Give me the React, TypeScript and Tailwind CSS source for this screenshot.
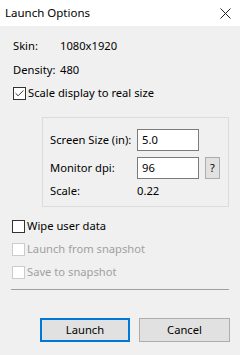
import { Check } from "lucide-react"

const Box = ({ checked, disabled }: { checked?: boolean; disabled?: boolean }) => (
  <div
    className={`w-[13px] h-[13px] border bg-white flex items-center justify-center shrink-0 ${
      disabled ? "border-[#cccccc]" : "border-[#333333]"
    }`}
  >
    {checked && <Check size={11} strokeWidth={2} className="text-[#222]" />}
  </div>
)

const CheckRow = ({ label, checked, disabled }: { label: string; checked?: boolean; disabled?: boolean }) => (
  <div className="flex items-center h-[16px] gap-[2px]">
    <Box checked={checked} disabled={disabled} />
    <span className={disabled ? "text-[#a0a0a0]" : "text-black"}>{label}</span>
  </div>
)

export default function App() {
  return (
    <div className="w-[240px] h-[355px] bg-[#f0f0f0] flex flex-col text-[11.2px] leading-[16px] font-['Noto_Sans',sans-serif] text-black whitespace-nowrap">
      <div className="h-[26px] bg-white flex items-center justify-between pl-[5px] pr-[9px] shrink-0">
        <span className="text-[11.5px]">Launch Options</span>
        <svg width="11" height="11" viewBox="0 0 11 11" className="text-[#222]">
          <path d="M0.5 0.5 L10.5 10.5 M10.5 0.5 L0.5 10.5" stroke="currentColor" strokeWidth="1" />
        </svg>
      </div>

      <div className="flex flex-col pl-[12px]">
        <div className="flex mt-[12px] h-[16px]">
          <span className="w-[48px] pl-[1px]">Skin:</span>
          <span>1080x1920</span>
        </div>
        <div className="flex mt-[8px] h-[16px]">
          <span className="w-[48px] pl-[1px]">Density:</span>
          <span>480</span>
        </div>
        <div className="mt-[7px] pl-[1px]">
          <CheckRow label="Scale display to real size" checked />
        </div>

        <div className="ml-[30px] mt-[16px] w-[187px] h-[90px] border border-[#dcdcdc] flex flex-col pl-[7px]">
          <div className="flex items-center mt-[11px] h-[22px]">
            <span className="w-[87px]">Screen Size (in):</span>
            <div className="w-[62px] h-[22px] border border-[#7a7a7a] bg-white flex items-center pl-[4px]">5.0</div>
          </div>
          <div className="flex items-center mt-[6px] h-[22px]">
            <span className="w-[87px]">Monitor dpi:</span>
            <div className="w-[62px] h-[22px] border border-[#7a7a7a] bg-white flex items-center pl-[4px]">96</div>
            <div className="ml-[6px] w-[15px] h-[22px] border border-[#adadad] bg-[#e1e1e1] flex items-center justify-center text-[11px]">?</div>
          </div>
          <div className="flex items-center mt-[4px] h-[16px]">
            <span className="w-[87px]">Scale:</span>
            <span>0.22</span>
          </div>
        </div>

        <div className="flex flex-col gap-[7px] mt-[11px]">
          <CheckRow label="Wipe user data" />
          <CheckRow label="Launch from snapshot" disabled />
          <CheckRow label="Save to snapshot" disabled />
        </div>

        <div className="mt-[9px] ml-[-1px] w-[218px] h-px bg-[#a0a0a0]" />

        <div className="flex mt-[28px] ml-[28px] gap-[9px]">
          <button className="w-[90px] h-[24px] border-2 border-[#0078d7] bg-[#e1e1e1]">Launch</button>
          <button className="w-[91px] h-[24px] border border-[#adadad] bg-[#e1e1e1]">Cancel</button>
        </div>
      </div>
    </div>
  )
}
